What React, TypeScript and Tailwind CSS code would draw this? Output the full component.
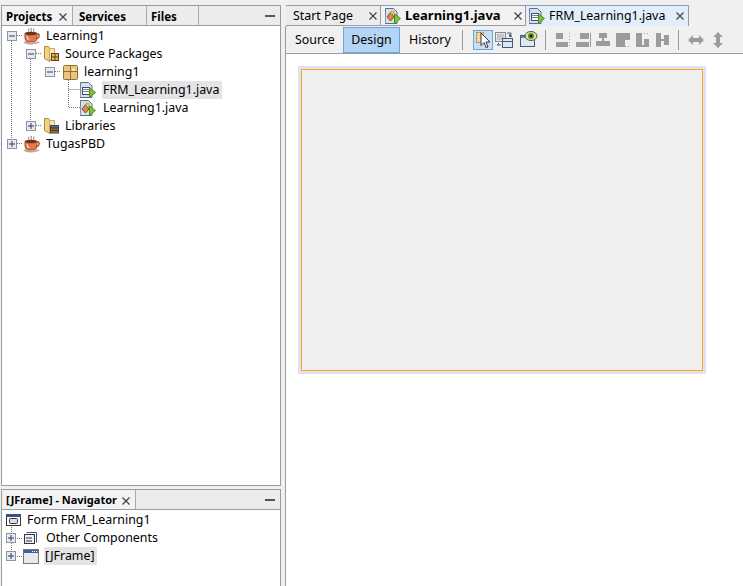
import type { ReactNode } from "react";

const font = "font-['Noto_Sans',sans-serif] text-[12.4px] text-black";

function Close() {
  return (
    <svg width="10" height="10" viewBox="0 0 10 10" className="shrink-0">
      <path d="M1.500 1.500l7 7M8.500 1.500l-7 7" stroke="#444" strokeWidth="1.200" />
    </svg>
  );
}

function Minimize() {
  return <div className="h-[2px] w-[10px] bg-[#555]" />;
}

function Box({ open }: { open?: boolean }) {
  return (
    <svg width="10" height="10" viewBox="0 0 10 10" className="shrink-0">
      <rect x="0.500" y="0.500" width="9" height="9" fill="#e8eaee" stroke="#8f949b" />
      <path d="M2 5h6" stroke="#1f3f78" />
      {!open && <path d="M5 2v6" stroke="#1f3f78" />}
    </svg>
  );
}

function Cup() {
  return (
    <svg width="16" height="17" viewBox="0 0 16 17">
      <path d="M5 0.500q-1 1.500 0 3.500M7.500 0q-1 2 0 4M10 0.500q-1 1.500 0 3.500" stroke="#8a8a8a" fill="none" />
      <path d="M1 5h12v5q0 3-3 4H4q-3-1-3-4z" fill="#dd7a50" stroke="#a9492a" />
      <path d="M13 6h1.500q1.500 1.500 0 3.500L12.500 11" fill="none" stroke="#a9492a" strokeWidth="1.300" />
      <ellipse cx="7" cy="5.500" rx="5.500" ry="1.800" fill="#6f3218" />
      <path d="M3 8q0 3 2 4" stroke="#f7d3bf" strokeWidth="1.300" fill="none" />
      <path d="M0 14q7 3.500 15 0" stroke="#c79f8c" strokeWidth="1.600" fill="none" />
    </svg>
  );
}

function Folder({ kind }: { kind: "src" | "lib" }) {
  return (
    <svg width="15" height="16" viewBox="0 0 15 16">
      <path d="M0.500 0.500h4l1.500 2v13L0.500 12.500z" fill="#f2d27e" stroke="#a98a42" />
      <path d="M5.500 2.500h5v11h-5z" fill="#f9e7ad" stroke="#c8aa60" />
      {kind === "src" ? (
        <g>
          <rect x="7.500" y="7.500" width="7" height="7" fill="#e0b865" stroke="#5f4418" />
          <path d="M7.500 11h7M11 7.500v7" stroke="#5f4418" />
        </g>
      ) : (
        <g>
          <rect x="6.500" y="7.500" width="8" height="2.500" fill="#5f7299" stroke="#35415c" />
          <rect x="6.500" y="10" width="8" height="2.500" fill="#a85a4a" stroke="#5e3128" />
          <rect x="6.500" y="12.500" width="8" height="2.500" fill="#74824f" stroke="#3f482a" />
        </g>
      )}
    </svg>
  );
}

function Pack() {
  return (
    <svg width="15" height="15" viewBox="0 0 15 15">
      <rect x="0.500" y="0.500" width="14" height="14" rx="1" fill="#e9c67f" stroke="#94702f" />
      <path d="M0.500 6.500h14M7.500 0.500v14" stroke="#94702f" />
      <rect x="9" y="4" width="3" height="1.500" fill="#fff3d0" />
    </svg>
  );
}

function JavaFile({ form }: { form?: boolean }) {
  return (
    <svg width="16" height="16" viewBox="0 0 16 16">
      <path d="M0.500 0.500h8l3.500 3.500v11.500h-12z" fill="#d5e0ee" stroke="#5d7088" />
      {form ? (
        <g>
          <rect x="2.500" y="5.500" width="7" height="7" fill="#fff" stroke="#3f5068" />
          <path d="M2.500 7.500h7M2.500 9.500h7" stroke="#6d7f96" />
        </g>
      ) : (
        <g>
          <path d="M2 9l3.500-4.500 3.500 4.500-3.500 4z" fill="#d98a4a" stroke="#7f5128" />
          <rect x="6" y="3" width="3" height="3.500" fill="#e8c860" stroke="#b08a30" strokeWidth="0.500" />
        </g>
      )}
      <path d="M9.500 6l6 4.500-6 5z" fill="#7fc13c" stroke="#4e8a1e" />
    </svg>
  );
}

function Row({ pad, expander, icon, gap, selected, children }: {
  pad: number;
  expander?: "open" | "closed";
  icon: ReactNode;
  gap: number;
  selected?: boolean;
  children: string;
}) {
  return (
    <div className="flex h-[18px] items-center relative" style={{ paddingLeft: pad }}>
      {expander && (
        <div className="absolute" style={{ left: pad - 17, top: 4 }}>
          <Box open={expander === "open"} />
        </div>
      )}
      <div className="flex w-[16px] justify-center shrink-0">{icon}</div>
      <span className={`h-[18px] px-[1px] leading-[18px] whitespace-nowrap ${selected ? "bg-[#e4e4e4] pr-[3px]" : ""}`} style={{ marginLeft: gap }}>
        {children}
      </span>
    </div>
  );
}

function PanelTab({ label, width, left, active, close, small }: {
  label: string;
  width: number;
  left: number;
  active?: boolean;
  close?: boolean;
  small?: boolean;
}) {
  return (
    <div
      className={`flex h-[19px] items-center justify-between pr-[4px] pt-[2px] border-r border-[#a6abb2] shrink-0 ${active ? "bg-[#f2f2f2]" : "bg-[#ececec]"}`}
      style={{ width, paddingLeft: left }}
    >
      <span className={`font-bold whitespace-nowrap ${small ? "text-[11px]" : "text-[11.5px]"}`}>{label}</span>
      {close && <Close />}
    </div>
  );
}

function Align({ d }: { d: string }) {
  return (
    <svg width="16" height="16" viewBox="0 0 16 16" className="shrink-0">
      <path d={d} fill="#9c9c9c" />
    </svg>
  );
}

const alignIcons = [
  "M1 1h7v6H1zM1 10h12v5H1zM14 1h1v1h-1zM14 4h1v1h-1zM14 7h1v1h-1zM14 10h1v1h-1zM14 13h1v1h-1z",
  "M5 1h9v6H5zM1 10h13v5H1zM15 1h1v14h-1z",
  "M4 1h8v5H4zM1 9h14v5H1zM7 6h2v3H7z",
  "M1 1h7v14H1zM8 1h7v7H10v7H8zM10 14h1v1h-1zM13 14h1v1h-1z",
  "M1 1h6v14H1zM9 7h5v8H9zM9 1h1v1H9zM12 1h1v1h-1zM7 13h2v2H7z",
  "M1 1h5v14H1zM9 3h5v10H9zM6 7h3v2H6z",
];

export default function App() {
  return (
    <div className={`flex h-[586px] w-[743px] overflow-hidden bg-[#f0f0f0] ${font}`}>
      <div className="ml-[1px] flex w-[280px] shrink-0 flex-col pt-[5px]">
        <div className="flex h-[481px] flex-col border border-[#989ca3] bg-white">
          <div className="flex h-[20px] shrink-0 border-b border-[#989ca3] bg-[#ececec]">
            <PanelTab label="Projects" width={71} left={4} active close />
            <PanelTab label="Services" width={74} left={6} />
            <PanelTab label="Files" width={52} left={4} />
            <div className="flex flex-1 items-center justify-end pr-[5px]"><Minimize /></div>
          </div>
          <div className="relative flex-1 pt-[1px]">
            <svg className="absolute left-0 top-0" width="90" height="125" fill="none" stroke="#777" strokeDasharray="1 1">
              <path d="M9.500 15v98M15 9.500h6M28.500 33v62M34 27.500h6M47.500 42v9M53 45.500h6M66.500 54v27.500h12M66.500 63.500h12M34 99.500h6M15 117.500h6" />
            </svg>
            <Row pad={22} expander="open" gap={5} icon={<Cup />}>Learning1</Row>
            <Row pad={41} expander="open" gap={5} icon={<Folder kind="src" />}>Source Packages</Row>
            <Row pad={60} expander="open" gap={5} icon={<Pack />}>learning1</Row>
            <Row pad={78} gap={6} selected icon={<JavaFile form />}>FRM_Learning1.java</Row>
            <Row pad={78} gap={6} icon={<JavaFile />}>Learning1.java</Row>
            <Row pad={41} expander="closed" gap={5} icon={<Folder kind="lib" />}>Libraries</Row>
            <Row pad={22} expander="closed" gap={5} icon={<Cup />}>TugasPBD</Row>
          </div>
        </div>
        <div className="mt-[3px] flex flex-1 flex-col border border-b-0 border-[#989ca3] bg-white">
          <div className="flex h-[20px] shrink-0 border-b border-[#989ca3] bg-[#ececec]">
            <PanelTab label="[JFrame] - Navigator" width={134} left={4} active close small />
            <div className="flex flex-1 items-center justify-end pr-[5px]"><Minimize /></div>
          </div>
          <div className="relative flex-1 pt-[1px]">
            <svg className="absolute left-0 top-[1px]" width="30" height="50" fill="none" stroke="#777" strokeDasharray="1 1">
              <path d="M9.500 14v28M15 27.500h6M15 45.500h6" />
            </svg>
            <Row pad={3} gap={5} icon={
              <svg width="15" height="12" viewBox="0 0 15 12">
                <rect x="0.500" y="0.500" width="14" height="11" fill="#fff" stroke="#333" />
                <rect x="0.500" y="0.500" width="14" height="2" fill="#3a4f8c" stroke="#3a4f8c" />
                <rect x="3.500" y="4.500" width="8" height="5" rx="1" fill="#ddd" stroke="#333" />
              </svg>
            }>Form FRM_Learning1</Row>
            <Row pad={21} expander="closed" gap={6} icon={
              <svg width="14" height="14" viewBox="0 0 14 14">
                <path d="M2.500 1.500h10v10" fill="none" stroke="#3a4f8c" />
                <rect x="0.500" y="3.500" width="10" height="9" fill="#eef0f6" stroke="#333" />
                <path d="M2 7h6M2 10h6" stroke="#333" />
              </svg>
            }>Other Components</Row>
            <Row pad={21} expander="closed" gap={5} selected icon={
              <svg width="16" height="15" viewBox="0 0 16 15">
                <rect x="0.500" y="0.500" width="15" height="14" fill="#e9e9e9" stroke="#777" />
                <rect x="1" y="1" width="14" height="3" fill="#3f5fa8" />
                <path d="M9 2.500h5" stroke="#fff" strokeDasharray="1 1" />
              </svg>
            }>[JFrame]</Row>
          </div>
        </div>
      </div>

      <div className="ml-[4px] flex flex-1 flex-col pt-[5px]">
        <div className="flex h-[21px] shrink-0 pl-[1px]">
          <div className="flex w-[95px] items-center justify-between border-y border-r border-[#989ca3] bg-[#ececec] pl-[7px] pr-[2px] pt-[1px]">
            <span>Start Page</span>
            <Close />
          </div>
          <div className="flex w-[145px] items-center border-y border-r border-[#989ca3] bg-[#f2f2f2] pl-[4px] pr-[2px]">
            <JavaFile />
            <span className="ml-[4px] text-[13px] font-bold">Learning1.java</span>
            <div className="ml-auto"><Close /></div>
          </div>
          <div className="flex w-[163px] items-center border border-b-0 border-l-0 border-[#8aa0b8] bg-[#e2effb] pl-[3px] pr-[3px]">
            <JavaFile form />
            <span className="ml-[4px]">FRM_Learning1.java</span>
            <div className="ml-auto"><Close /></div>
          </div>
        </div>

        <div className="flex h-[28px] shrink-0 items-center border-b border-l border-[#8d9eb0] pl-[1px]">
          <span className="w-[56px] pl-[8px] pt-[1px]">Source</span>
          <div className="flex h-[26px] w-[57px] items-center justify-center border border-[#6ea3d6] bg-[#b3d4f5] pt-[1px]">Design</div>
          <span className="w-[62px] pl-[9px] pt-[1px]">History</span>
          <div className="h-[20px] w-px bg-[#999]" />
          <div className="ml-[10px] flex h-[20px] w-[20px] items-center justify-center border border-[#6ea3d6] bg-[#c5dff7]">
            <svg width="17" height="17" viewBox="0 0 17 17">
              <rect x="1.500" y="1.500" width="7" height="10" fill="#f0d9a8" stroke="#b0702a" strokeDasharray="2 1" />
              <path d="M6 2l9 9h-4l2 5-2 .5-2-5-3 3z" fill="#fff" stroke="#333" />
            </svg>
          </div>
          <div className="ml-[2px] flex w-[18px] justify-center">
            <svg width="18" height="17" viewBox="0 0 18 17">
              <rect x="0.500" y="1.500" width="10" height="9" fill="#e3e3e3" stroke="#8c8c8c" />
              <path d="M2 4h7M2 6h7M2 8h5" stroke="#aaa" />
              <rect x="7.500" y="7.500" width="10" height="9" fill="#dfe7f0" stroke="#445a78" />
              <path d="M7.500 10.500h10" stroke="#445a78" />
              <path d="M12 2h4v3M14.500 3.500l2 2 -2 0z" fill="none" stroke="#445a78" />
              <path d="M2 14h4M2 14l2-2" fill="none" stroke="#445a78" />
            </svg>
          </div>
          <div className="ml-[7px] flex w-[18px] justify-center">
            <svg width="18" height="17" viewBox="0 0 18 17">
              <rect x="0.500" y="4.500" width="14" height="11" fill="#dfe7f0" stroke="#445a78" />
              <rect x="1" y="5" width="13" height="2" fill="#6f86a8" />
              <ellipse cx="11" cy="5" rx="6" ry="4.500" fill="#d8e8a0" stroke="#555" />
              <circle cx="11" cy="5" r="3" fill="#5b8c1e" />
              <circle cx="11" cy="5" r="1.200" fill="#111" />
            </svg>
          </div>
          <div className="ml-[7px] h-[20px] w-px bg-[#999]" />
          <div className="ml-[9px] flex gap-[4px]">
            {alignIcons.map((d) => (
              <Align key={d} d={d} />
            ))}
          </div>
          <div className="ml-[7px] h-[20px] w-px bg-[#999]" />
          <div className="ml-[9px] flex gap-[6px]">
            <Align d="M0 8l5-5v3h6V3l5 5-5 5v-3H5v3z" />
            <Align d="M8 0l5 5h-3v6h3l-5 5-5-5h3V5H3z" />
          </div>
        </div>

        <div className="flex-1 border-l border-[#989ca3] bg-white pl-[12px] pt-[12px]">
          <div className="h-[308px] w-[408px] bg-[#e0e0f8] p-[3px]">
            <div className="h-[302px] w-[402px] border border-[#ffaa00] bg-[#f0f0f0]" />
          </div>
        </div>
      </div>
    </div>
  );
}
